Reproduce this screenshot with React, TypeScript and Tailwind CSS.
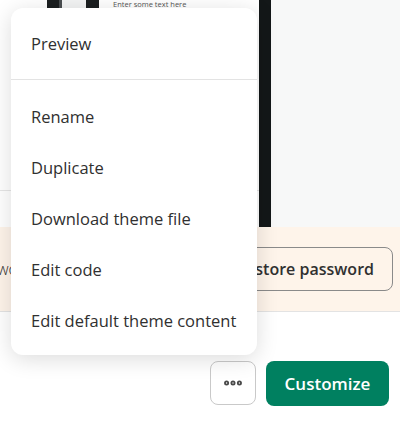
import { MoreHorizontal } from "lucide-react";

const groups = [["Preview"], ["Rename", "Duplicate", "Download theme file", "Edit code", "Edit default theme content"]];

export default function App() {
  return (
    <div
      className="relative w-[400px] h-[438px] overflow-hidden bg-white text-[#303030]"
      style={{ fontFamily: '"Open Sans", "Noto Sans", sans-serif' }}
    >
      {/* theme preview */}
      <div className="flex h-[227px]">
        <div className="w-[259px] flex flex-col bg-white">
          <div className="flex items-start h-[10px]">
            <div className="ml-[47px] w-[12px] h-full bg-[#1b1f20]" />
            <div className="w-[3px] h-full bg-[#4a4e50]" />
            <div className="w-[24px] h-full bg-[#f3f4f4]" />
            <div className="w-[13px] h-full bg-[#1b1f20]" />
            <span className="ml-[14px] text-[7.5px] leading-[10px] -mt-[1px] text-[#555]">Enter some text here</span>
          </div>
          <div className="mt-[180px] border-t border-[#e6e6e6]" />
        </div>
        <div className="w-[12px] bg-[#131718]" />
        <div className="flex-1 bg-[#f7f8f8]" />
      </div>

      {/* password banner */}
      <div className="flex items-center h-[85px] bg-[#fef4ea] border-b border-[#e3e3e3]">
        <span className="w-[11px] overflow-hidden shrink-0">
          <span className="block -ml-[3px] text-[16px] font-light whitespace-nowrap">word</span>
        </span>
        <button className="ml-auto mr-[7px] h-[44px] px-[18px] rounded-lg border border-[#8a8a8a] text-[16px] font-semibold whitespace-nowrap">
          Remove store password
        </button>
      </div>

      {/* actions */}
      <div className="flex justify-end gap-[10px] mt-[49px] mr-[11px]">
        <button className="w-[46px] h-[44px] flex items-center justify-center rounded-lg border border-[#c9c9c9] bg-white text-[#4a4a4a]">
          <MoreHorizontal size={22} strokeWidth={3.5} />
        </button>
        <button className="w-[123px] h-[45px] rounded-lg bg-[#008060] text-white text-[17px] font-semibold">
          Customize
        </button>
      </div>

      {/* menu */}
      <div className="absolute left-[11px] top-[8px] w-[246px] bg-white rounded-xl shadow-[0_4px_22px_rgba(0,0,0,0.14)]">
        {groups.map((g, i) => (
          <div key={i} className={i > 0 ? "border-t border-[#e3e3e3] pt-[12px] pb-[8px]" : "pt-[11px] pb-[9px]"}>
            {g.map((label) => (
              <div key={label} className="h-[51px] flex items-center px-[20px] text-[16.5px] whitespace-nowrap">
                {label}
              </div>
            ))}
          </div>
        ))}
      </div>
    </div>
  );
}
